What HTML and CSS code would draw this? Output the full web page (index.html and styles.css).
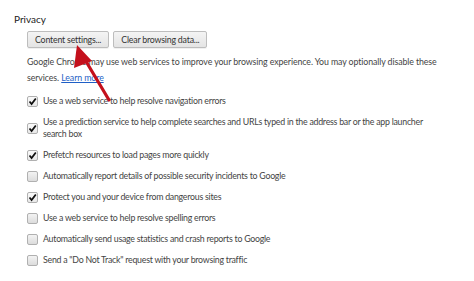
FILE: index.html
```
<!DOCTYPE html>
<html>
<head>
<meta charset="utf-8">
<link rel="stylesheet" href="styles.css">
</head>
<body>
<div class="page">
  <h3 class="section-title">Privacy</h3>
  <div class="section-body">
    <div class="buttons">
      <button class="btn">Content settings...</button>
      <button class="btn">Clear browsing data...</button>
    </div>
    <p class="desc">Google Chrome may use web services to improve your browsing experience. You may optionally disable these services. <a class="link" href="#">Learn more</a></p>
    <ul class="opts">
      <li class="opt"><span class="cb on"></span><span class="lbl">Use a web service to help resolve navigation errors</span></li>
      <li class="opt"><span class="cb on"></span><span class="lbl">Use a prediction service to help complete searches and URLs typed in the address bar or the app launcher search box</span></li>
      <li class="opt"><span class="cb on"></span><span class="lbl">Prefetch resources to load pages more quickly</span></li>
      <li class="opt"><span class="cb"></span><span class="lbl">Automatically report details of possible security incidents to Google</span></li>
      <li class="opt"><span class="cb on"></span><span class="lbl">Protect you and your device from dangerous sites</span></li>
      <li class="opt"><span class="cb"></span><span class="lbl">Use a web service to help resolve spelling errors</span></li>
      <li class="opt"><span class="cb"></span><span class="lbl">Automatically send usage statistics and crash reports to Google</span></li>
      <li class="opt"><span class="cb"></span><span class="lbl">Send a "Do Not Track" request with your browsing traffic</span></li>
    </ul>
  </div>
  <svg class="arrow" width="474" height="281" viewBox="0 0 474 281">
    <line x1="109" y1="100" x2="84" y2="58" stroke="#c4101c" stroke-width="3.2" stroke-linecap="round"/>
    <polygon points="77,45 92,61 74,68" fill="#c4101c"/>
  </svg>
</div>
</body>
</html>
```
FILE: styles.css
```
html, body {
  margin: 0;
  padding: 0;
  background: #fff;
}
.page {
  position: relative;
  width: 474px;
  height: 281px;
  overflow: hidden;
  font-family: Lato, "Open Sans", sans-serif;
  font-size: 8.8px;
  letter-spacing: -0.25px;
  color: #333;
  padding: 12px 0 0 14px;
  box-sizing: border-box;
}
.section-title {
  margin: 0;
  font-size: 10px;
  letter-spacing: 0;
  font-weight: normal;
  color: #222;
  line-height: 14px;
}
.section-body {
  padding-left: 13px;
  padding-top: 5px;
}
.buttons {
  display: flex;
  gap: 4px;
}
.btn {
  font-family: inherit;
  font-size: 8.8px;
  letter-spacing: -0.2px;
  color: #333;
  height: 17px;
  line-height: 13px;
  padding: 0 7px;
  border: 1px solid #bdbdbd;
  border-radius: 2px;
  background: linear-gradient(#f4f4f4, #e4e4e4);
  box-shadow: 0 1px 0 rgba(0,0,0,0.06);
}
.desc {
  margin: 6px 0 0;
  width: 432px;
  letter-spacing: -0.1px;
  line-height: 16px;
  color: #444;
}
.link {
  color: #1f5fc6;
  text-decoration: underline;
}
.opts {
  list-style: none;
  margin: 9px 0 0;
  padding: 0;
  display: flex;
  flex-direction: column;
  gap: 9px;
}
.opt {
  display: flex;
  align-items: center;
  gap: 4px;
  line-height: 12px;
  color: #444;
}
.lbl {
  width: 405px;
}
.cb {
  flex: none;
  width: 11px;
  height: 11px;
  box-sizing: border-box;
  border: 1px solid #b0b0b0;
  border-radius: 2px;
  background: linear-gradient(#f3f3f3, #dcdcdc);
  margin-right: 1px;
}
.cb.on {
  background-image: url("data:image/svg+xml;utf8,<svg xmlns='http://www.w3.org/2000/svg' width='9' height='9' viewBox='0 0 9 9'><path d='M1.5 4.5 L3.6 7 L7.8 1.5' fill='none' stroke='%23111' stroke-width='1.8'/></svg>"), linear-gradient(#fafafa, #e8e8e8);
  background-repeat: no-repeat;
  background-position: center;
}
.arrow {
  position: absolute;
  left: 0;
  top: 0;
  pointer-events: none;
}
```
